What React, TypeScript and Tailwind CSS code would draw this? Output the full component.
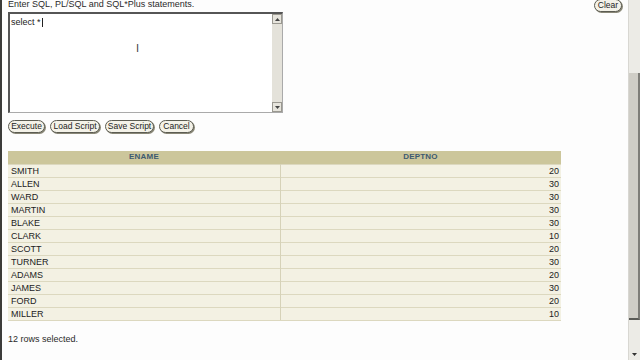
import React from "react";

const rows: [string, number][] = [
  ["SMITH", 20],
  ["ALLEN", 30],
  ["WARD", 30],
  ["MARTIN", 30],
  ["BLAKE", 30],
  ["CLARK", 10],
  ["SCOTT", 20],
  ["TURNER", 30],
  ["ADAMS", 20],
  ["JAMES", 30],
  ["FORD", 20],
  ["MILLER", 10],
];

function PillButton({ label, width }: { label: string; width: string }) {
  return (
    <button
      className={`${width} h-[13px] rounded-full border border-[#5c5c52] bg-[#f4f2e8] text-[8.5px] leading-[11px] text-[#222] whitespace-nowrap shadow-[1px_1px_0_#8a8878] flex items-center justify-center`}
    >
      {label}
    </button>
  );
}

function Arrow({ up }: { up?: boolean }) {
  return (
    <div className="w-[10px] h-[10px] bg-[#e6e4dc] border border-[#9a9890] flex items-center justify-center">
      <svg width="5" height="3" viewBox="0 0 5 3">
        <path d={up ? "M0 3 L2.5 0 L5 3 Z" : "M0 0 L2.5 3 L5 0 Z"} fill="#444" />
      </svg>
    </div>
  );
}

export default function App() {
  return (
    <div
      className="w-[640px] h-[360px] overflow-hidden bg-[#fdfdfd] flex text-[#222]"
      style={{ fontFamily: '"Liberation Sans", Arial, sans-serif' }}
    >
      {/* dark window edge */}
      <div className="w-[2px] bg-[#3c3c3a]" />

      <div className="flex-1 flex flex-col pl-[6px] pr-[6px]">
        <div className="flex items-start justify-between h-[12px] -mt-[1px]">
          <p className="text-[9px] leading-[11px] text-[#2a2a2a]">
            Enter SQL, PL/SQL and SQL*Plus statements.
          </p>
          <PillButton label="Clear" width="w-[28px]" />
        </div>

        {/* textarea */}
        <div className="mt-[1px] w-[275px] h-[101px] border-t-2 border-l-2 border-b border-r border-t-[#555] border-l-[#555] border-b-[#aaa] border-r-[#aaa] bg-white flex">
          <div className="flex-1 relative">
            <span className="absolute left-[1px] top-[3px] text-[9px] leading-[10px]">
              select *<span className="inline-block w-[1px] h-[9px] bg-[#222] align-middle ml-[1px]" />
            </span>
            <span className="absolute left-[126px] top-[29px] text-[11px] leading-[11px] text-[#444] font-light">
              I
            </span>
          </div>
          <div className="w-[10px] bg-[#e4e2da] flex flex-col justify-between">
            <Arrow up />
            <Arrow />
          </div>
        </div>

        {/* buttons */}
        <div className="mt-[7px] flex gap-[5px]">
          <PillButton label="Execute" width="w-[37px]" />
          <PillButton label="Load Script" width="w-[50px]" />
          <PillButton label="Save Script" width="w-[49px]" />
          <PillButton label="Cancel" width="w-[35px]" />
        </div>

        {/* results table */}
        <table className="mt-[18px] w-[553px] border-collapse text-[9px]">
          <thead>
            <tr className="h-[13px] bg-[#ccc69b]">
              <th className="w-[272px] text-[8px] font-bold tracking-wide text-[#3d5a70] leading-[12px]">
                ENAME
              </th>
              <th className="text-[8px] font-bold tracking-wide text-[#3d5a70] leading-[12px]">DEPTNO</th>
            </tr>
          </thead>
          <tbody>
            {rows.map(([name, dept]) => (
              <tr key={name} className="h-[13px] bg-[#f3f1e3] border-t border-[#dcd8bf]">
                <td className="pl-[3px] leading-[12px] border-r border-[#d6d2b8]">{name}</td>
                <td className="pr-[2px] text-right leading-[12px]">{dept}</td>
              </tr>
            ))}
            <tr className="h-[1px] bg-[#dcd8bf]">
              <td colSpan={2} />
            </tr>
          </tbody>
        </table>

        <p className="mt-[13px] text-[9px] leading-[11px] text-[#2a2a2a]">12 rows selected.</p>
      </div>

      {/* page scrollbar */}
      <div className="w-[12px] flex flex-col bg-[#ecebe6] border-l border-[#d8d7d2]">
        <div className="h-[73px]" />
        <div className="h-[247px] bg-[#cfcdc6] border-r-2 border-[#7e7d78] border-b-2 border-b-[#5a5a56]" />
        <div className="flex-1" />
        <div className="h-[12px] flex items-center justify-center">
          <svg width="5" height="3" viewBox="0 0 5 3">
            <path d="M0 0 L2.5 3 L5 0 Z" fill="#333" />
          </svg>
        </div>
      </div>
    </div>
  );
}
